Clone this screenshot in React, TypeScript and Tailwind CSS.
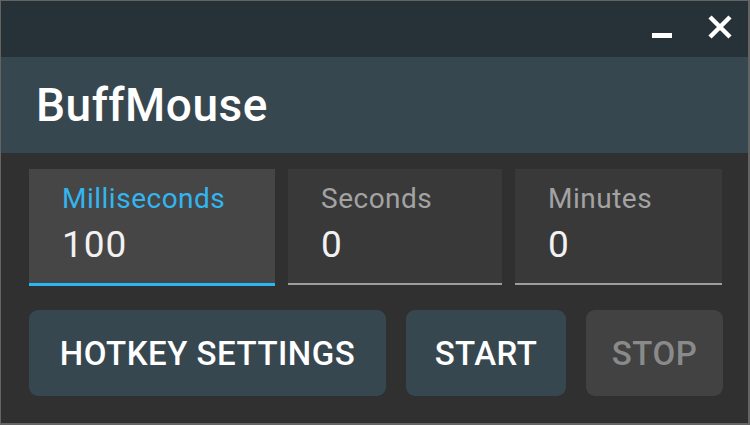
import { useState } from "react";

type Field = { label: string; value: string };

const fields: Field[] = [
  { label: "Milliseconds", value: "100" },
  { label: "Seconds", value: "0" },
  { label: "Minutes", value: "0" },
];

const widths = ["w-[246px]", "w-[214px]", "w-[207px]"];

const App = () => {
  const [focused] = useState(0);

  return (
    <div
      className="w-[750px] h-[425px] flex flex-col border-l border-t border-r-2 border-b-2 border-[#646464] bg-[#303030]"
      style={{ fontFamily: "Roboto, 'Noto Sans', sans-serif" }}
    >
      {/* title bar */}
      <div className="h-[56px] shrink-0 bg-[#263238] flex items-start justify-end gap-[34px] pr-[16px] pt-[14px]">
        <svg className="mt-[9px]" width="24" height="24" viewBox="0 0 24 24">
          <rect x="2" y="9" width="20" height="5" fill="#ffffff" />
        </svg>
        <svg width="24" height="24" viewBox="0 0 24 24">
          <path d="M2 2 L22 22 M22 2 L2 22" stroke="#ffffff" strokeWidth="4.5" />
        </svg>
      </div>

      {/* header */}
      <div className="h-[96px] shrink-0 bg-[#37474f] flex items-center pl-[35px]">
        <h1 className="text-[46px] leading-none font-medium tracking-[0.5px] text-white">BuffMouse</h1>
      </div>

      {/* body */}
      <div className="flex-1 flex flex-col pl-[28px] pt-[16px]">
        <div className="flex gap-[13px]">
          {fields.map((f, i) => {
            const active = i === focused;
            return (
              <div
                key={f.label}
                className={
                  widths[i] +
                  " flex flex-col pl-[33px] pt-[16px] " +
                  (active
                    ? "h-[117px] bg-[#464646] border-b-[3px] border-[#29b6f6]"
                    : "h-[116px] bg-[#393939] border-b-2 border-[#9e9e9e]")
                }
              >
                <span
                  className={
                    "text-[28px] leading-none tracking-[0.5px] " +
                    (active ? "text-[#33b5f0]" : "text-[#a3a3a3]")
                  }
                >
                  {f.label}
                </span>
                <span className="mt-[13px] text-[37px] leading-none tracking-[1px] text-[#f2f2f2]">
                  {f.value}
                </span>
              </div>
            );
          })}
        </div>

        <div className="flex gap-[20px] mt-[24px]">
          <button className="w-[357px] h-[86px] rounded-[9px] bg-[#37474f] text-white text-[33px] leading-none font-medium tracking-[0.5px]">
            HOTKEY SETTINGS
          </button>
          <button className="w-[160px] h-[86px] rounded-[9px] bg-[#37474f] text-white text-[33px] leading-none font-medium tracking-[0.5px]">
            START
          </button>
          <button className="w-[137px] h-[86px] rounded-[9px] bg-[#424242] text-[#8a8a8a] text-[33px] leading-none font-medium tracking-[0.5px]">
            STOP
          </button>
        </div>
      </div>
    </div>
  );
};

export default App;
